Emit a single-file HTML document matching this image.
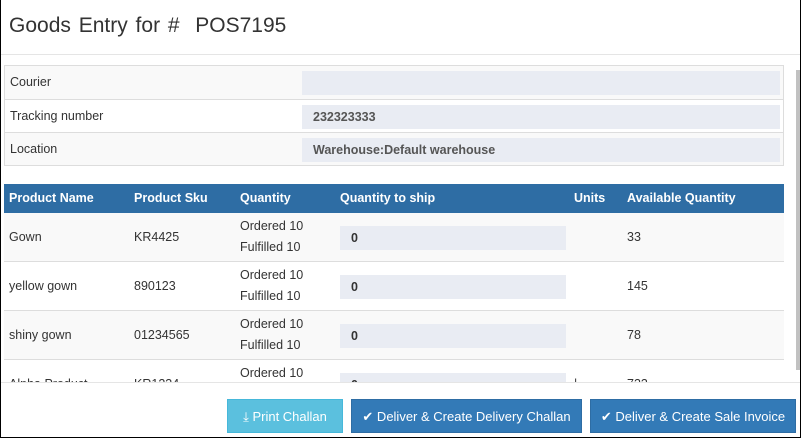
<!DOCTYPE html>
<html><head><style>
*{box-sizing:border-box;margin:0;padding:0}
body{width:803px;height:439px;background:#fff;font-family:"Liberation Sans",sans-serif;font-size:12.5px;color:#333;position:relative;overflow:hidden}
.frame{position:absolute;left:0;top:0;width:801px;height:438px;border:1px solid #000;border-top:none}
.title{position:absolute;left:9px;top:14px;font-size:21px;color:#333;word-spacing:2px}
.hline{position:absolute;left:1px;width:799px;height:1px;background:#e5e5e5}
.scroll{position:absolute;left:1px;top:55px;width:795px;height:327px;overflow:hidden}
.sb{position:absolute;left:796px;top:55px;width:4px;height:327px;background:#fff}
.sb div{position:absolute;left:0;top:15px;width:4px;height:300px;background:#c1c1c1}
.info{position:absolute;left:3px;top:10px;width:780px;border:1px solid #ddd}
.info .r{height:33px;border-top:1px solid #ddd;position:relative;background:#f9f9f9}
.info .r:first-child{border-top:none}
.info .r:nth-child(2){background:#fff}
.info .l{position:absolute;left:5px;top:9px}
.info .in{position:absolute;left:297px;top:5px;width:478px;height:24px;background:#e9ecf3;padding:5px 11px;font-weight:bold;color:#555}
.tbl{position:absolute;left:3px;top:129px;width:780px}
.th{height:29px;background:#2e6da4;color:#fff;font-weight:bold;position:relative}
.th span,.tr span{position:absolute}
.th span{top:7px}
.tr{height:49px;border-bottom:1px solid #ddd;position:relative;background:#f9f9f9}
.tr .c{top:17px}
.tr .q1{top:6px}.tr .q2{top:27px}
.tr .box{left:336px;top:13px;width:226px;height:24px;background:#e9ecf3;padding:5px 11px;font-weight:bold}
.btn{position:absolute;top:399px;height:34px;color:#fff;font-size:13px;padding-top:9px;text-align:center;border:1px solid #2e6da4;background:#337ab7}
</style></head><body>
<div class="title">Goods Entry for # &nbsp;POS7195</div>
<div class="hline" style="top:54px"></div>
<div class="scroll">
 <div class="info">
  <div class="r"><span class="l">Courier</span><div class="in"></div></div>
  <div class="r"><span class="l">Tracking number</span><div class="in">232323333</div></div>
  <div class="r"><span class="l">Location</span><div class="in">Warehouse:Default warehouse</div></div>
 </div>
 <div class="tbl">
  <div class="th"><span style="left:5px">Product Name</span><span style="left:130px">Product Sku</span><span style="left:236px">Quantity</span><span style="left:336px">Quantity to ship</span><span style="left:570px">Units</span><span style="left:623px">Available Quantity</span></div>
  <div class="tr" style="background:#f9f9f9"><span class="c" style="left:5px">Gown</span><span class="c" style="left:130px">KR4425</span><span class="q1" style="left:236px">Ordered 10</span><span class="q2" style="left:236px">Fulfilled 10</span><span class="box">0</span><span class="c" style="left:623px">33</span></div>
  <div class="tr" style="background:#fff"><span class="c" style="left:5px">yellow gown</span><span class="c" style="left:130px">890123</span><span class="q1" style="left:236px">Ordered 10</span><span class="q2" style="left:236px">Fulfilled 10</span><span class="box">0</span><span class="c" style="left:623px">145</span></div>
  <div class="tr" style="background:#f9f9f9"><span class="c" style="left:5px">shiny gown</span><span class="c" style="left:130px">01234565</span><span class="q1" style="left:236px">Ordered 10</span><span class="q2" style="left:236px">Fulfilled 10</span><span class="box">0</span><span class="c" style="left:623px">78</span></div>
  <div class="tr" style="background:#fff"><span class="c" style="left:5px">Alpha Product</span><span class="c" style="left:130px">KR1234</span><span class="q1" style="left:236px">Ordered 10</span><span class="q2" style="left:236px">Fulfilled 10</span><span class="box">0</span><span class="c" style="left:570px">|</span><span class="c" style="left:623px">733</span></div>
 </div>
</div>
<div class="sb"><div></div></div>
<div class="hline" style="top:382px"></div>
<div class="btn" style="left:227px;width:116px;background:#5bc0de;border-color:#46b8da">&#x2913; Print Challan</div>
<div class="btn" style="left:351px;width:231px">&#10004; Deliver &amp; Create Delivery Challan</div>
<div class="btn" style="left:590px;width:206px">&#10004; Deliver &amp; Create Sale Invoice</div>
<div class="frame"></div>
</body></html>
